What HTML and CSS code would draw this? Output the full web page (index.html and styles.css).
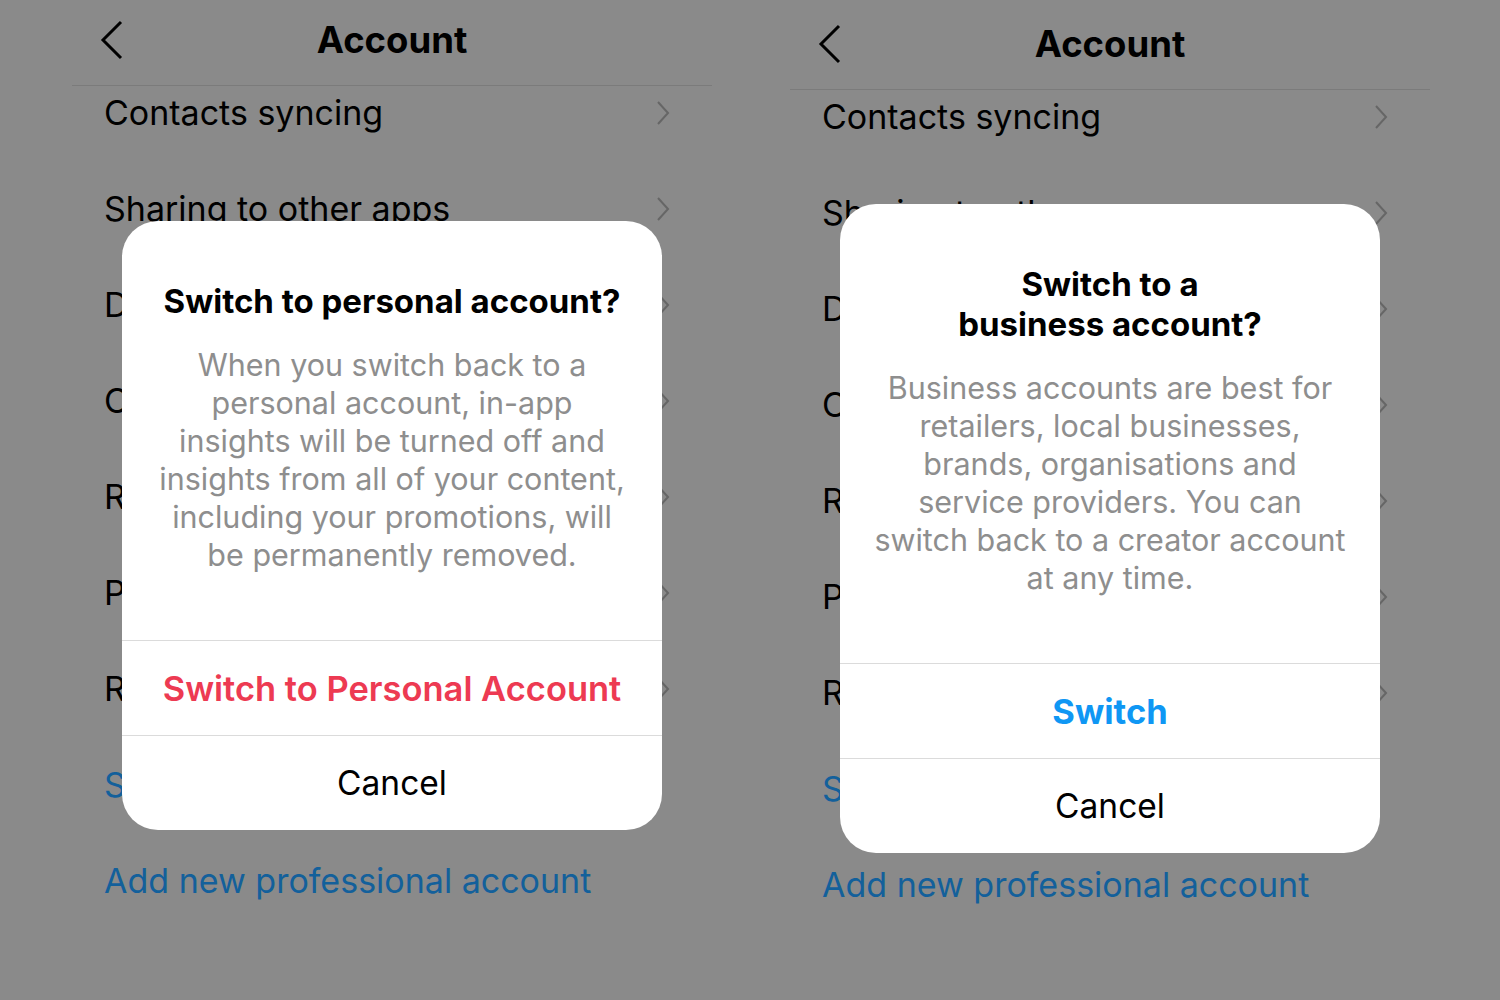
FILE: index.html
```html
<!DOCTYPE html>
<html lang="en">
<head>
  <meta charset="UTF-8" />
  <meta name="viewport" content="width=device-width, initial-scale=1.0"/>
  <title>Switch account type</title>
  <link rel="stylesheet" href="styles.css">
</head>
<body>
  <div class="screens">
    <section class="phone">
      <header class="topbar">
        <svg class="back" width="24" height="40" viewBox="0 0 24 40"><path d="M21 2 L3 20 L21 38"/></svg>
        <h1>Account</h1>
        <span class="spacer"></span>
      </header>
      <ul class="menu">
        <li>Contacts syncing<svg class="chev" width="14" height="26" viewBox="0 0 14 26"><path d="M2 2 L12 13 L2 24"/></svg></li>
        <li>Sharing to other apps<svg class="chev" width="14" height="26" viewBox="0 0 14 26"><path d="M2 2 L12 13 L2 24"/></svg></li>
        <li>Data usage<svg class="chev" width="14" height="26" viewBox="0 0 14 26"><path d="M2 2 L12 13 L2 24"/></svg></li>
        <li>Captions<svg class="chev" width="14" height="26" viewBox="0 0 14 26"><path d="M2 2 L12 13 L2 24"/></svg></li>
        <li>Request verification<svg class="chev" width="14" height="26" viewBox="0 0 14 26"><path d="M2 2 L12 13 L2 24"/></svg></li>
        <li>Posts you've liked<svg class="chev" width="14" height="26" viewBox="0 0 14 26"><path d="M2 2 L12 13 L2 24"/></svg></li>
        <li>Recently deleted<svg class="chev" width="14" height="26" viewBox="0 0 14 26"><path d="M2 2 L12 13 L2 24"/></svg></li>
        <li class="link">Switch account type</li>
        <li class="link">Add new professional account</li>
      </ul>
      <div class="dialog">
        <div class="dialog-body">
          <h2>Switch to personal account?</h2>
          <p>When you switch back to a<br>personal account, in-app<br>insights will be turned off and<br>insights from all of your content,<br>including your promotions, will<br>be permanently removed.</p>
        </div>
        <button class="btn danger">Switch to Personal Account</button>
        <button class="btn">Cancel</button>
      </div>
    </section>

    <section class="phone second">
      <header class="topbar">
        <svg class="back" width="24" height="40" viewBox="0 0 24 40"><path d="M21 2 L3 20 L21 38"/></svg>
        <h1>Account</h1>
        <span class="spacer"></span>
      </header>
      <ul class="menu">
        <li>Contacts syncing<svg class="chev" width="14" height="26" viewBox="0 0 14 26"><path d="M2 2 L12 13 L2 24"/></svg></li>
        <li>Sharing to other apps<svg class="chev" width="14" height="26" viewBox="0 0 14 26"><path d="M2 2 L12 13 L2 24"/></svg></li>
        <li>Data usage<svg class="chev" width="14" height="26" viewBox="0 0 14 26"><path d="M2 2 L12 13 L2 24"/></svg></li>
        <li>Captions<svg class="chev" width="14" height="26" viewBox="0 0 14 26"><path d="M2 2 L12 13 L2 24"/></svg></li>
        <li>Request verification<svg class="chev" width="14" height="26" viewBox="0 0 14 26"><path d="M2 2 L12 13 L2 24"/></svg></li>
        <li>Posts you've liked<svg class="chev" width="14" height="26" viewBox="0 0 14 26"><path d="M2 2 L12 13 L2 24"/></svg></li>
        <li>Recently deleted<svg class="chev" width="14" height="26" viewBox="0 0 14 26"><path d="M2 2 L12 13 L2 24"/></svg></li>
        <li class="link">Switch account type</li>
        <li class="link">Add new professional account</li>
      </ul>
      <div class="dialog">
        <div class="dialog-body">
          <h2>Switch to a<br>business account?</h2>
          <p>Business accounts are best for<br>retailers, local businesses,<br>brands, organisations and<br>service providers. You can<br>switch back to a creator account<br>at any time.</p>
        </div>
        <button class="btn primary">Switch</button>
        <button class="btn">Cancel</button>
      </div>
    </section>
  </div>
</body>
</html>
```

FILE: styles.css
```css
* { box-sizing: border-box; }
body {
  margin: 0;
  background: #8a8a8a;
  font-family: Inter, "Noto Sans", sans-serif;
  color: #000;
  overflow: hidden;
}
.screens {
  display: flex;
  gap: 78px;
  padding-left: 72px;
}
.phone {
  position: relative;
  width: 640px;
  height: 1000px;
}
.phone.second { margin-top: 4px; }

.topbar {
  height: 86px;
  display: flex;
  align-items: center;
  padding: 0 28px 6px;
  border-bottom: 1px solid #7b7b7b;
}
.back { fill: none; stroke: #000; stroke-width: 3; }
.topbar h1 {
  flex: 1;
  margin: 0;
  text-align: center;
  font-size: 36.5px;
  font-weight: 700;
}
.spacer { width: 24px; }

.menu {
  list-style: none;
  margin: 0;
  padding: 0;
}
.menu li {
  height: 96px;
  padding: 6px 42px 0 32px;
  display: flex;
  justify-content: space-between;
  align-items: flex-start;
  line-height: 42px;
  font-size: 34px;
}
.menu li.link { color: #13609b; }
.chev {
  margin-top: 8px;
  fill: none;
  stroke: #666;
  stroke-width: 2;
}

.dialog {
  position: absolute;
  top: 221px;
  left: 50px;
  width: 540px;
  background: #fff;
  border-radius: 36px;
  overflow: hidden;
  text-align: center;
}
.second .dialog { top: 200px; }
.dialog-body { padding: 60px 16px 66px; }
.dialog h2 {
  margin: 0 0 25px;
  font-size: 33px;
  line-height: 40px;
  font-weight: 700;
}
.dialog p {
  margin: 0;
  font-size: 30.5px;
  line-height: 38px;
  color: #8e8e8e;
}
.btn {
  display: block;
  width: 100%;
  height: 95px;
  border: 0;
  border-top: 1px solid #dbdbdb;
  background: none;
  font-family: inherit;
  font-size: 33.5px;
  color: #000;
  padding: 0;
}
.btn.danger { color: #ed3a52; font-weight: 600; font-size: 34.5px; }
.btn.primary { color: #0f97f4; font-weight: 700; font-size: 34.5px; }
```
